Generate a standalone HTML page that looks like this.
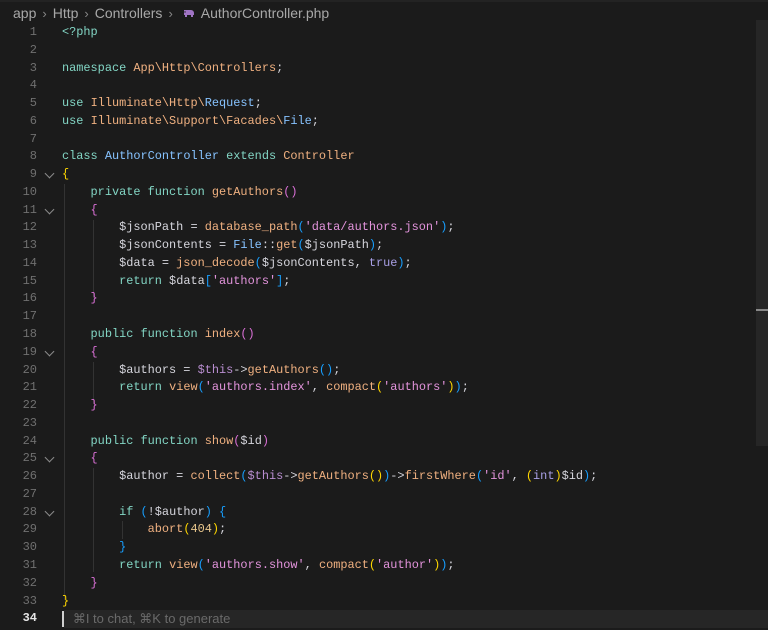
<!DOCTYPE html>
<html><head><meta charset="utf-8"><style>
body{margin:0;width:768px;height:630px;background:#1b1b1b;overflow:hidden;position:relative;font-family:"Liberation Mono",monospace;}
.bc{position:absolute;top:4px;left:13px;font:14px "Liberation Sans",sans-serif;color:#a8a8a8;white-space:pre;line-height:18px}
.bc .s{color:#888;margin:0 6px;font-size:13px}
.topline{position:absolute;top:0;left:0;right:0;height:2px;background:#232323}
.cur{position:absolute;left:64px;right:0;top:610px;height:18px;background:#262626}
.caret{position:absolute;left:62px;top:611px;width:2px;height:16px;background:#d0d0d0}
.nums{position:absolute;left:0;top:24px;width:37px;text-align:right;font-size:12px;color:#707070;line-height:17.76px;white-space:pre}
.nums b{color:#e6e6e6}
.code{position:absolute;left:62px;top:24px;font-size:11.9px;white-space:pre;color:#d6d6dd;line-height:17.76px}
.chev{position:absolute;left:46px;width:6px;height:6px;border-right:1.2px solid #8a8a8a;border-bottom:1.2px solid #8a8a8a;transform:rotate(45deg)}
.g{position:absolute;width:1px;background:#333}
.k{color:#83d6c5}.c{color:#efb080}.t{color:#87c3ff}.f{color:#efb080}.s1{color:#e394dc}.n{color:#ebc88d}
.y{color:#ffd700}.p{color:#da70d6}.b{color:#179fff}.th{color:#b98ed1}.tr{color:#a9a0e6}
.hint{color:#6a6a6a;font-family:"Liberation Sans",sans-serif;font-size:13px}
.mm{position:absolute;left:756px;top:20px;width:12px;height:426px;background:#262626}
.mk{position:absolute;left:756px;top:309px;width:12px;height:2px;background:#888}
</style></head><body>
<div class="topline"></div>
<div class="bc">app<span class="s">›</span>Http<span class="s">›</span>Controllers<span class="s">›</span><svg width="13" height="9" viewBox="0 0 13 9" style="margin:0 6px 0 3px;vertical-align:0"><path d="M2 1h7a3 3 0 0 1 3 3v2h-1v2h-2v-2h-4v2h-2v-2h-1v-3z" fill="#a074c4"/><circle cx="3" cy="3" r="0.7" fill="#1b1b1b"/></svg>AuthorController.php</div>
<div class="cur"></div><div class="caret"></div>
<div class="mm"></div><div class="mk"></div>
<div class="g" style="left:64px;top:184px;height:416px"></div>
<div class="g" style="left:93px;top:220px;height:78px"></div>
<div class="g" style="left:93px;top:362px;height:42px"></div>
<div class="g" style="left:93px;top:468px;height:104px"></div>
<div class="g" style="left:122px;top:521px;height:18px"></div>
<div class="chev" style="top:170px"></div>
<div class="chev" style="top:206px"></div>
<div class="chev" style="top:348px"></div>
<div class="chev" style="top:454px"></div>
<div class="chev" style="top:508px"></div>
<div class="nums">1
2
3
4
5
6
7
8
9
10
11
12
13
14
15
16
17
18
19
20
21
22
23
24
25
26
27
28
29
30
31
32
33
<b>34</b></div>
<div class="code"><span class="k">&lt;?php</span>

<span class="k">namespace</span> <span class="c">App\Http\Controllers</span>;

<span class="k">use</span> <span class="c">Illuminate\Http\</span><span class="t">Request</span>;
<span class="k">use</span> <span class="c">Illuminate\Support\Facades\</span><span class="t">File</span>;

<span class="k">class</span> <span class="t">AuthorController</span> <span class="k">extends</span> <span class="c">Controller</span>
<span class="y">{</span>
    <span class="k">private function</span> <span class="f">getAuthors</span><span class="p">()</span>
    <span class="p">{</span>
        $jsonPath = <span class="f">database_path</span><span class="b">(</span><span class="s1">'data/authors.json'</span><span class="b">)</span>;
        $jsonContents = <span class="t">File</span>::<span class="f">get</span><span class="b">(</span>$jsonPath<span class="b">)</span>;
        $data = <span class="f">json_decode</span><span class="b">(</span>$jsonContents, <span class="tr">true</span><span class="b">)</span>;
        <span class="k">return</span> $data<span class="b">[</span><span class="s1">'authors'</span><span class="b">]</span>;
    <span class="p">}</span>

    <span class="k">public function</span> <span class="f">index</span><span class="p">()</span>
    <span class="p">{</span>
        $authors = <span class="th">$this</span>-&gt;<span class="f">getAuthors</span><span class="b">()</span>;
        <span class="k">return</span> <span class="f">view</span><span class="b">(</span><span class="s1">'authors.index'</span>, <span class="f">compact</span><span class="y">(</span><span class="s1">'authors'</span><span class="y">)</span><span class="b">)</span>;
    <span class="p">}</span>

    <span class="k">public function</span> <span class="f">show</span><span class="p">(</span>$id<span class="p">)</span>
    <span class="p">{</span>
        $author = <span class="f">collect</span><span class="b">(</span><span class="th">$this</span>-&gt;<span class="f">getAuthors</span><span class="y">()</span><span class="b">)</span>-&gt;<span class="f">firstWhere</span><span class="b">(</span><span class="s1">'id'</span>, <span class="y">(</span><span class="tr">int</span><span class="y">)</span>$id<span class="b">)</span>;

        <span class="k">if</span> <span class="b">(</span>!$author<span class="b">)</span> <span class="b">{</span>
            <span class="f">abort</span><span class="y">(</span><span class="n">404</span><span class="y">)</span>;
        <span class="b">}</span>
        <span class="k">return</span> <span class="f">view</span><span class="b">(</span><span class="s1">'authors.show'</span>, <span class="f">compact</span><span class="y">(</span><span class="s1">'author'</span><span class="y">)</span><span class="b">)</span>;
    <span class="p">}</span>
<span class="y">}</span>
<span class="hint">   ⌘I to chat, ⌘K to generate</span></div>
</body></html>
